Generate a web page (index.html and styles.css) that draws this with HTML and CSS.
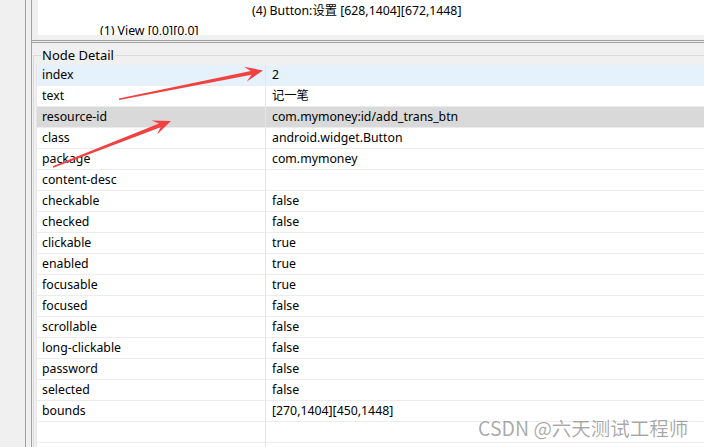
FILE: index.html
```html
<!DOCTYPE html>
<html lang="en">
<head>
  <meta charset="UTF-8">
  <title>Node Detail</title>
  <link rel="stylesheet" href="styles.css">
</head>
<body>

  <div class="app">
    <div class="gutter"></div>

    <div class="main">
      <!-- hierarchy tree, scrolled so only two lines show -->
      <div class="tree">
        <div class="tree-item depth-4">(4) Button:设置 [628,1404][672,1448]</div>
        <div class="tree-item depth-1">(1) View [0,0][0,0]</div>
      </div>

      <div class="splitter"></div>

      <fieldset class="detail">
        <legend>Node Detail</legend>
        <div class="props">
          <div class="row hover"><span class="key">index</span><span class="val">2</span></div>
          <div class="row"><span class="key">text</span><span class="val">记一笔</span></div>
          <div class="row selected"><span class="key">resource-id</span><span class="val">com.mymoney:id/add_trans_btn</span></div>
          <div class="row"><span class="key">class</span><span class="val">android.widget.Button</span></div>
          <div class="row"><span class="key">package</span><span class="val">com.mymoney</span></div>
          <div class="row"><span class="key">content-desc</span><span class="val"></span></div>
          <div class="row"><span class="key">checkable</span><span class="val">false</span></div>
          <div class="row"><span class="key">checked</span><span class="val">false</span></div>
          <div class="row"><span class="key">clickable</span><span class="val">true</span></div>
          <div class="row"><span class="key">enabled</span><span class="val">true</span></div>
          <div class="row"><span class="key">focusable</span><span class="val">true</span></div>
          <div class="row"><span class="key">focused</span><span class="val">false</span></div>
          <div class="row"><span class="key">scrollable</span><span class="val">false</span></div>
          <div class="row"><span class="key">long-clickable</span><span class="val">false</span></div>
          <div class="row"><span class="key">password</span><span class="val">false</span></div>
          <div class="row"><span class="key">selected</span><span class="val">false</span></div>
          <div class="row"><span class="key">bounds</span><span class="val">[270,1404][450,1448]</span></div>
          <div class="row"><span class="key"></span><span class="val"></span></div>
          <div class="row"><span class="key"></span><span class="val"></span></div>
        </div>
      </fieldset>
    </div>
  </div>

  <!-- red annotation arrows drawn over the screenshot -->
  <svg class="arrows" width="704" height="447" viewBox="0 0 704 447">
    <polygon points="118.8,98.5 250.8,70.9 243.9,66.7 263,70.5 246.8,81.4 251.6,74.8 119.2,100.1"/>
    <polygon points="52.7,166.3 159.1,123.5 151.5,120.6 171,121 157,134.5 160.6,127.2 53.3,167.8"/>
  </svg>

  <div class="watermark">CSDN @六天测试工程师</div>

</body>
</html>
```

FILE: styles.css
```css
* {
  box-sizing: border-box;
  margin: 0;
  padding: 0;
}

body {
  width: 704px;
  height: 447px;
  overflow: hidden;
  position: relative;
  background-color: #f0f0f0;
  font-family: "Noto Sans", "Noto Sans CJK SC", sans-serif;
  font-size: 12.3px;
  color: #000;
}

.app {
  display: flex;
  height: 100%;
}

.gutter {
  width: 26px;
  flex-shrink: 0;
  border-right: 1px solid #a0a0a0;
}

.main {
  flex: 1;
  margin-left: 5px;
  border-left: 1px solid #a0a0a0;
  display: flex;
  flex-direction: column;
  min-width: 0;
}

/* top: tree view */
.tree {
  height: 35px;
  margin-left: 6px;
  padding-top: 1px;
  background-color: #fff;
  overflow: hidden;
  flex-shrink: 0;
}

.tree-item {
  line-height: 20px;
  white-space: nowrap;
}

.depth-4 {
  padding-left: 214px;
}

.depth-1 {
  padding-left: 62px;
}

.splitter {
  height: 8px;
  flex-shrink: 0;
  border-bottom: 3px double #a0a0a0;
}

/* bottom: node detail group box */
.detail {
  margin: 4px 0 0 1px;
  padding: 2px 0 0 2px;
  border: 1px solid #dcdcdc;
  border-right: none;
  border-bottom: none;
  flex: 1;
  min-width: 0;
}

.detail legend {
  margin-left: 5px;
  padding: 0 1px;
  font-size: 13px;
  line-height: 16px;
}

.props {
  background-color: #fff;
  border-left: 1px solid #e6e6e6;
  height: 100%;
}

.row {
  display: grid;
  grid-template-columns: 229px 1fr;
  height: 21px;
  line-height: 20px;
  border-bottom: 1px solid #ececec;
  white-space: nowrap;
}

.key {
  padding-left: 5px;
  border-right: 1px solid #e6e6e6;
}

.val {
  padding-left: 6px;
}

.row.hover {
  background-color: #e5f1fb;
}

.row.selected {
  background-color: #d9d9d9;
}

.arrows {
  position: absolute;
  left: 0;
  top: 0;
  fill: #f24141;
}

.watermark {
  position: absolute;
  left: 478px;
  top: 416px;
  font-family: "Noto Sans CJK SC", sans-serif;
  font-size: 19.5px;
  line-height: 24px;
  color: rgba(0, 0, 0, 0.35);
  text-shadow: 0 0 2px rgba(255, 255, 255, 0.8);
  white-space: nowrap;
}
```
